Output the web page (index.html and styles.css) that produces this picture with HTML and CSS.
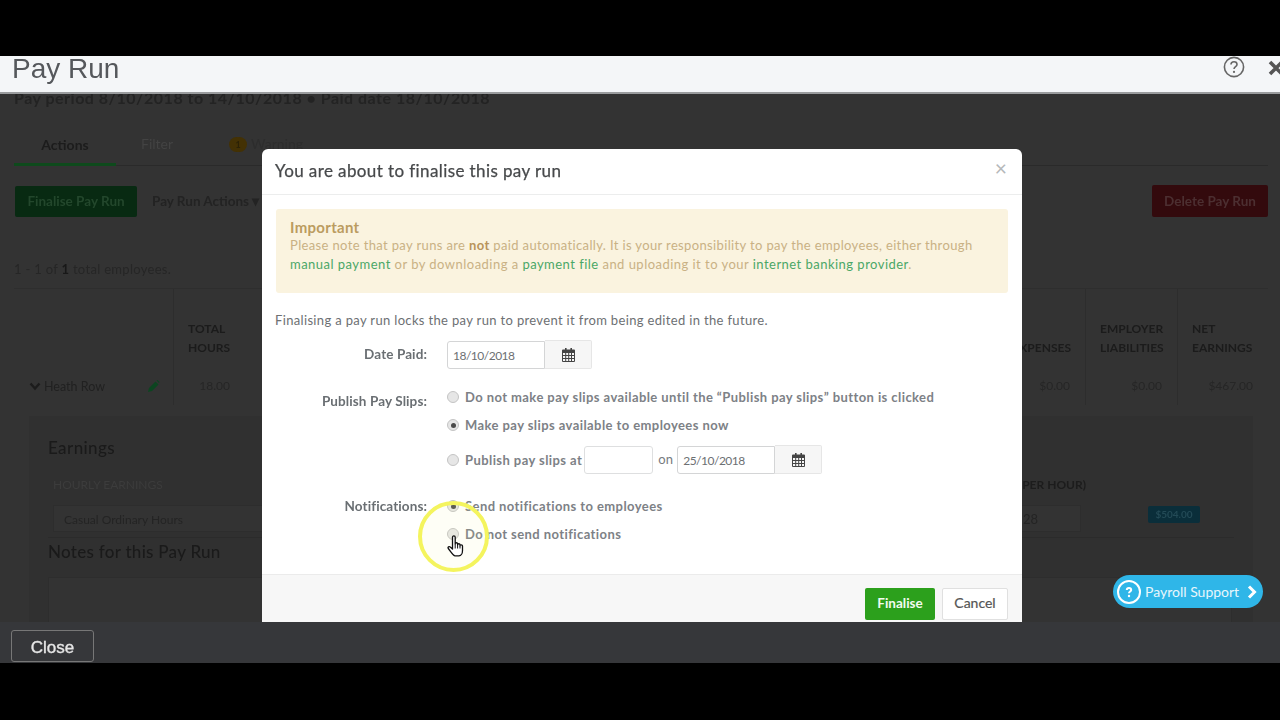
FILE: index.html
```html
<!DOCTYPE html>
<html lang="en">
<head>
<meta charset="utf-8">
<title>Pay Run</title>
<link rel="stylesheet" href="styles.css">
</head>
<body>
<div class="frame">
  <header class="topbar">
    <h1 class="page-title">Pay Run</h1>
    <div class="top-icons">
      <svg class="help-icon" width="22" height="22" viewBox="0 0 22 22" aria-hidden="true"><circle cx="11" cy="11" r="9.6" fill="none" stroke="#666" stroke-width="1.6"/><path d="M8 8.6c0-1.8 1.4-2.8 3-2.8s3 1 3 2.6c0 2.3-3 2.2-3 4.6" fill="none" stroke="#666" stroke-width="1.6"/><circle cx="11" cy="15.9" r="1.1" fill="#666"/></svg>
      <svg class="close-icon" width="16" height="16" viewBox="0 0 16 16" aria-hidden="true"><path d="M2 2l12 12M14 2L2 14" stroke="#555" stroke-width="3.6" fill="none"/></svg>
    </div>
  </header>

  <main class="page">
    <p class="period">Pay period 8/10/2018 to 14/10/2018 • Paid date 18/10/2018</p>
    <nav class="tabs">
      <span class="tab tab-active">Actions</span>
      <span class="tab tab-filter">Filter</span>
      <span class="tab tab-warning"><i class="warn-badge">1</i>Warning</span>
    </nav>
    <div class="toolbar">
      <span class="btn-finalise-dim">Finalise Pay Run</span>
      <span class="btn-actions-dim">Pay Run Actions ▾</span>
      <span class="btn-delete-dim">Delete Pay Run</span>
    </div>
    <p class="count">1 - 1 of <b>1</b> total employees.</p>

    <section class="table">
      <div class="cell head"></div>
      <div class="cell head line">TOTAL<br>HOURS</div>
      <div class="cell head"></div>
      <div class="cell head end"><br>EXPENSES</div>
      <div class="cell head line">EMPLOYER<br>LIABILITIES</div>
      <div class="cell head line">NET<br>EARNINGS</div>
      <div class="cell name">
        <svg width="12" height="9" viewBox="0 0 12 9" aria-hidden="true"><path d="M1.5 1.5L6 6.5l4.500-5" fill="none" stroke="#1c1c1c" stroke-width="2.400"/></svg>
        <span class="emp">Heath Row</span>
        <svg class="pencil" width="12" height="12" viewBox="0 0 12 12" aria-hidden="true"><path d="M0 12l1-4 6.500-6.500 3 3L4 11zM8.500.5l1-.5 2 2-.5 1z" fill="#0c4520"/></svg>
      </div>
      <div class="cell num line">18.00</div>
      <div class="cell num"></div>
      <div class="cell num">$0.00</div>
      <div class="cell num line">$0.00</div>
      <div class="cell num line">$467.00</div>
    </section>

    <section class="panel">
      <h2 class="panel-title">Earnings</h2>
      <div class="earn-head">
        <span class="earn-label">HOURLY EARNINGS</span>
        <span class="earn-rate">(PER HOUR)</span>
      </div>
      <div class="earn-row">
        <span class="ghost-input">Casual Ordinary Hours</span>
        <span class="ghost-input rate-input">28</span>
        <span class="amount-badge">$504.00</span>
      </div>
      <h2 class="panel-title notes-title">Notes for this Pay Run</h2>
      <div class="notes-box"></div>
    </section>
  </main>

  <footer class="bottombar">
    <span class="close-btn">Close</span>
  </footer>

  <div class="support">
    <svg width="26" height="26" viewBox="0 0 26 26" aria-hidden="true"><circle cx="13" cy="13" r="11" fill="none" stroke="#fff" stroke-width="2"/><path d="M10.800 11c0-1.300 1-2 2.200-2s2.200.7 2.200 1.900c0 1.600-2.200 1.600-2.200 3.300" fill="none" stroke="#fff" stroke-width="2"/><circle cx="13" cy="17" r="1.200" fill="#fff"/></svg>
    <span class="support-text">Payroll Support</span>
    <svg width="10" height="14" viewBox="0 0 10 14" aria-hidden="true"><path d="M2 1.500L7.500 7 2 12.500" fill="none" stroke="#fff" stroke-width="3"/></svg>
  </div>

  <div class="modal">
    <div class="modal-head">
      <span class="modal-title">You are about to finalise this pay run</span>
      <span class="modal-x">×</span>
    </div>
    <div class="modal-body">
      <div class="alert">
        <div class="alert-title">Important</div>
        <div class="alert-text">Please note that pay runs are <b>not</b> paid automatically. It is your responsibility to pay the employees, either through <span class="alert-line2"><a class="alert-link">manual payment</a> or by downloading a <a class="alert-link">payment file</a> and uploading it to your <a class="alert-link">internet banking provider</a>.</span></div>
      </div>
      <p class="intro">Finalising a pay run locks the pay run to prevent it from being edited in the future.</p>

      <div class="form-row row-date">
        <span class="form-label">Date Paid:</span>
        <div class="date-field">
          <span class="date-input">18/10/2018</span>
          <span class="date-addon"><svg class="cal" width="13" height="14" viewBox="0 0 13 14" aria-hidden="true"><use href="#cal-glyph"/></svg></span>
        </div>
      </div>

      <div class="form-row row-publish">
        <span class="form-label label-radio">Publish Pay Slips:</span>
        <div class="options">
          <div class="option"><i class="radio"></i>Do not make pay slips available until the “Publish pay slips” button is clicked</div>
          <div class="option"><i class="radio on"></i>Make pay slips available to employees now</div>
          <div class="option option-date"><i class="radio"></i>Publish pay slips at
            <span class="time-input"></span>
            <span class="on-word">on</span>
            <div class="date-field">
              <span class="date-input">25/10/2018</span>
              <span class="date-addon"><svg class="cal" width="13" height="14" viewBox="0 0 13 14" aria-hidden="true"><use href="#cal-glyph"/></svg></span>
            </div>
          </div>
        </div>
      </div>

      <div class="form-row row-notify">
        <span class="form-label">Notifications:</span>
        <div class="options">
          <div class="option"><i class="radio on"></i>Send notifications to employees</div>
          <div class="option"><i class="radio"></i>Do not send notifications</div>
        </div>
      </div>
    </div>
    <div class="modal-foot">
      <span class="btn-finalise">Finalise</span>
      <span class="btn-cancel">Cancel</span>
    </div>
    <div class="highlight"></div>
    <svg class="hand" width="18" height="22" viewBox="0 0 18 22" aria-hidden="true"><path d="M5.500 2.200c0-1.700 2.700-1.700 2.700 0v6.600c0-1.400 2.400-1.400 2.400 0v1c0-1.400 2.400-1.400 2.400 0v1c0-1.300 2.500-1.300 2.500.2V15.500c0 2.800-1.400 5.300-3.500 5.300H8c-1.500 0-2.500-1.500-4-3.600L1.300 13.500c-.9-1.300.8-2.600 2-1.400l2.200 2z" fill="#fff" stroke="#111" stroke-width="1.300" stroke-linejoin="round"/><path d="M8.200 9v4.500M10.600 10v3.500M13 11v2.500" stroke="#111" stroke-width="1" fill="none"/></svg>
  </div>
</div>

<svg class="defs" width="0" height="0" aria-hidden="true"><defs><g id="cal-glyph"><path fill="#444" fill-rule="evenodd" d="M3 0h1.600v1.500h3.800V0H10v1.500h2a1 1 0 0 1 1 1V13a1 1 0 0 1-1 1H1a1 1 0 0 1-1-1V2.500a1 1 0 0 1 1-1h2zM1 5v2h2.200V5zm3.200 0v2h2V5zm3 0v2h1.800V5zM10 5v2h2V5zM1 8v2h2.200V8zm3.200 0v2h2V8zm3 0v2h1.800V8zM10 8v2h2V8zM1 11v2h2.200v-2zm3.200 0v2h2v-2zm3 0v2h1.800v-2zM10 11v2h2v-2z"/></g></defs></svg>
</body>
</html>
```
FILE: styles.css
```css
* { box-sizing: border-box; }
html, body { margin: 0; height: 100%; background: #000; overflow: hidden; }
body { padding-top: 56px; font-family: "Lato", "Liberation Sans", sans-serif; }
.defs { position: absolute; }

.frame { position: relative; width: 1280px; height: 607px; display: flex; flex-direction: column; overflow: hidden; }

/* top bar */
.topbar { position: relative; z-index: 2; flex: none; height: 38px; background: #f4f6f8; border-bottom: 2px solid #9a9c9e; display: flex; justify-content: space-between; align-items: center; padding-left: 12px; }
.page-title { margin: -11px 0 0; font: 400 28px/24px "Liberation Sans", Arial, sans-serif; color: #55585c; filter: blur(.3px); }
.top-icons { display: flex; align-items: center; gap: 23px; margin: -13px -4px 0 0; }
.help-icon { display: block; margin-top: -1px; }
.close-icon { display: block; margin-top: 1px; }

/* dimmed page */
.page { flex: 1; min-height: 0; overflow: hidden; background: #333; padding: 0 12px 0 14px; color: #1f1f1f; filter: blur(.5px); }
.period { margin: -6px 0 0; font-size: 16px; line-height: 20px; font-weight: 700; letter-spacing: .5px; color: #232323; white-space: nowrap; }
.tabs { height: 58px; display: flex; align-items: flex-end; border-bottom: 1px solid #2a2a2a; font-size: 14px; }
.tab { height: 30px; line-height: 18px; color: #262626; }
.tab-active { width: 102px; text-align: center; font-weight: 700; border-bottom: 3px solid #0e4a1c; margin-bottom: -1px; color: #1c1c1c; }
.tab-filter { margin-left: 25px; color: #434343; width: 70px; }
.tab-warning { margin-left: 18px; color: #2d2d2d; display: flex; gap: 4px; }
.warn-badge { width: 18px; height: 15px; margin-top: 2px; border-radius: 8px; background: #433104; color: #2b2206; font: 700 9px/15px "Lato", sans-serif; text-align: center; }
.toolbar { margin-top: 19px; height: 32px; display: flex; align-items: center; font-size: 13.5px; font-weight: 700; }
.btn-finalise-dim { margin-left: 1px; width: 122px; height: 31px; line-height: 31px; text-align: center; background: #082a12; color: #23472c; border-radius: 2px; }
.btn-actions-dim { margin-left: 15px; color: #232323; }
.btn-delete-dim { margin-left: auto; width: 116px; height: 32px; line-height: 32px; text-align: center; background: #330a0d; color: #4c2f31; border-radius: 2px; }
.count { margin: 42px 0 0; font-size: 13px; line-height: 20px; letter-spacing: .3px; color: #262626; }
.count b { color: #181818; }

.table { margin-top: 9px; display: grid; grid-template-columns: 159px 72px 1fr 92px 92px 91px; grid-template-rows: 84px 32px; border-top: 1px solid #2e2e2e; }
.cell { padding: 0 15px; font-size: 12px; }
.head { padding: 30px 14px 0; line-height: 19px; font-weight: 700; color: #1b1b1b; white-space: nowrap; }
.end { text-align: right; }
.line { border-left: 1px solid #2d2d2d; }
.name { padding: 0 0 0 15px; display: flex; align-items: center; height: 26px; font-size: 12.5px; gap: 3px; color: #212121; }
.emp { width: 101px; }
.pencil { display: block; }
.num { line-height: 26px; text-align: right; color: #262626; }

.panel { margin: 11px 15px 0 15px; background: #303030; padding: 20px 19px 0; height: 220px; }
.panel-title { margin: 0; font-size: 17px; line-height: 24px; font-weight: 500; letter-spacing: .4px; color: #1a1a1a; }
.earn-head { margin-top: 17px; display: flex; justify-content: space-between; font-size: 12px; line-height: 16px; padding: 0 148px 0 5px; }
.earn-label { color: #3c3c3c; }
.earn-rate { font-weight: 700; color: #1c1c1c; }
.earn-row { margin-top: 12px; display: flex; padding: 0 34px 0 5px; border-bottom: 1px solid #2b2b2b; height: 33px; align-items: flex-start; }
.ghost-input { width: 212px; height: 27px; line-height: 27px; padding-left: 10px; font-size: 12px; background: #333; border: 1px solid #2d2d2d; color: #242424; }
.rate-input { margin-left: auto; width: 121px; padding-left: 62px; font-size: 13px; }
.amount-badge { margin-left: 67px; width: 52px; height: 17px; margin-top: 1px; line-height: 17px; text-align: center; background: #0a2e3a; color: #234a56; font-size: 10px; font-weight: 700; border-radius: 2px; }
.notes-title { margin-top: 2px; letter-spacing: .28px; }
.notes-box { margin-top: 13px; margin-right: 2px; height: 60px; background: #333; border: 1px solid #2d2d2d; }

/* bottom bar */
.bottombar { position: relative; z-index: 2; flex: none; height: 41px; background: #36373a; padding: 8px 0 0 11px; }
.close-btn { display: block; width: 83px; height: 32px; border: 1px solid #777; border-radius: 3px; text-align: center; font: 400 17px/33px "Liberation Sans", Arial, sans-serif; -webkit-text-stroke: .35px #e6e6e6; color: #e6e6e6; filter: blur(.3px); }

/* support pill */
.support { position: absolute; z-index: 3; left: 1113px; top: 519px; width: 150px; height: 33px; border-radius: 17px; background: #2fb6e8; display: flex; align-items: center; padding: 0 6px 0 3px; color: #fff; }
.support-text { margin-left: 3px; margin-right: auto; font-size: 14px; color: #e8f6fc; }

/* modal */
.modal { position: absolute; z-index: 1; left: 262px; top: 93px; width: 760px; height: 473px; background: #fff; border-radius: 6px 6px 0 0; display: flex; flex-direction: column; }
.modal-head { flex: none; height: 46px; border-bottom: 1px solid #eceded; display: flex; justify-content: space-between; align-items: center; padding: 0 15px 2px 13px; }
.modal-title { font-size: 17px; letter-spacing: .4px; -webkit-text-stroke: .25px #47494b; color: #47494b; filter: blur(.25px); }
.modal-x { font-size: 21px; line-height: 21px; color: #b5b8ba; margin-top: -7px; }
.modal-body { flex: 1; padding: 14px 14px 0; }
.alert { height: 84px; background: #faf3df; border-radius: 3px; padding: 9px 14px; }
.alert-title { font-size: 15px; line-height: 18px; font-weight: 700; letter-spacing: .3px; color: #bb9c5f; }
.alert-text { font-size: 13px; line-height: 19px; letter-spacing: .36px; color: #c9b184; width: 700px; }
.alert-text b { color: #b8935a; }
.alert-line2 { letter-spacing: .47px; }
.alert-link { color: #4aa767; }
.intro { margin: 18px 0 0 -1px; font-size: 13px; line-height: 19px; letter-spacing: .34px; color: #6d7073; }

.form-row { display: grid; grid-template-columns: 151px 1fr; column-gap: 20px; }
.row-date { margin-top: 11px; }
.row-publish { margin-top: 18px; }
.row-notify { margin-top: 22px; }
.form-label { text-align: right; font-size: 13.500px; line-height: 26px; font-weight: 700; letter-spacing: .1px; color: #6a6f73; filter: blur(.2px); }
.row-notify .form-label { line-height: 20px; }
.label-radio { line-height: 28px; }
.options { display: flex; flex-direction: column; gap: 8px; }
.option { display: flex; align-items: center; height: 20px; font-size: 13px; font-weight: 700; letter-spacing: .42px; color: #7d8186; white-space: nowrap; }
.option-date { height: 28px; margin-top: 3px; }
.radio { flex: none; width: 12px; height: 12px; margin-right: 6px; border-radius: 50%; background: #e6e6e6; border: 1px solid #c4c4c4; display: flex; align-items: center; justify-content: center; }
.radio.on::after { content: ""; width: 5px; height: 5px; border-radius: 50%; background: #4a4a4a; }
.date-field { display: flex; }
.date-input { width: 98px; height: 28px; line-height: 28px; padding-left: 5px; border: 1px solid #d4d5d6; border-radius: 3px 0 0 3px; font-size: 12px; font-weight: 400; letter-spacing: -.5px; color: #6d7073; }
.date-addon { width: 47px; height: 29px; margin-top: -1px; background: #f6f6f6; border: 1px solid #e6e6e6; border-left: 0; border-radius: 0 2px 2px 0; display: flex; align-items: center; justify-content: center; }
.cal { display: block; }
.time-input { width: 69px; height: 28px; margin-left: 2px; border: 1px solid #dedfe0; border-radius: 3px; }
.on-word { margin: -3px 3px 0 5px; width: 16px; font-weight: 400; letter-spacing: .2px; color: #777b80; }

.modal-foot { flex: none; height: 48px; background: #f7f7f7; border-top: 1px solid #ebebeb; padding: 13px 14px 0 0; display: flex; justify-content: flex-end; gap: 7px; }
.btn-finalise { width: 70px; height: 32px; line-height: 30px; text-align: center; border-radius: 2px; background: #2ca01c; color: #f2fbf0; font-size: 13.500px; font-weight: 700; }
.btn-cancel { width: 66px; height: 32px; line-height: 28px; text-align: center; border-radius: 2px; background: #fff; border: 1px solid #e0e0e0; color: #555; font-size: 14px; -webkit-text-stroke: .2px #555; }

/* recorded pointer highlight */
.highlight { position: absolute; left: 156px; top: 352px; width: 71px; height: 71px; border-radius: 50%; border: 4px solid #f4f45e; background: rgba(250, 250, 170, .1); filter: blur(.4px); }
.hand { position: absolute; left: 185px; top: 386px; }
```
